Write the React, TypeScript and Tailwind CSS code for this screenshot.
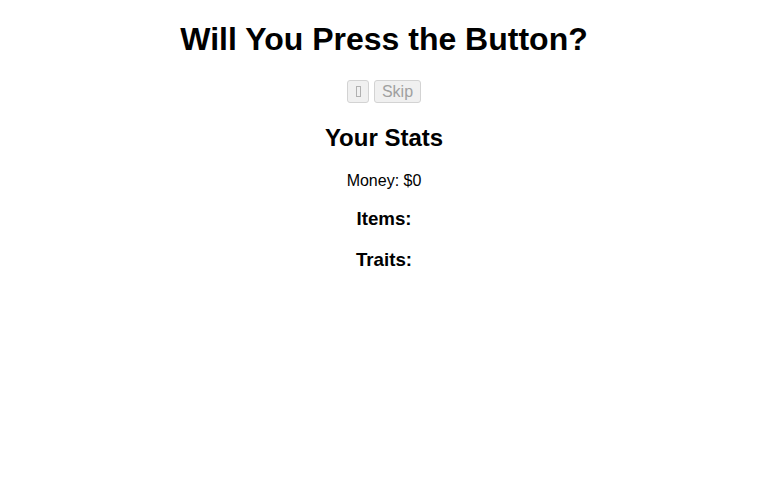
export default function App() {
  return (
    <div
      className="min-h-screen bg-white text-black text-center"
      style={{ fontFamily: '"Liberation Sans", Arial, sans-serif' }}
    >
      <div className="flex flex-col items-center pt-[21px]">
        <h1 className="text-[32px] leading-[37px] font-bold m-0">Will You Press the Button?</h1>

        <div className="mt-[22px] flex gap-[5px] items-center">
          <button
            disabled
            className="h-[23px] w-[22px] border border-[#d3d3d3] rounded-[3px] bg-[#f0f0f0] flex items-center justify-center"
          >
            <span className="block w-[5px] h-[11px] border border-[#b0b0b0]" />
          </button>
          <button
            disabled
            className="h-[23px] w-[47px] pt-[1px] border border-[#d3d3d3] rounded-[3px] bg-[#f0f0f0] text-[#a0a0a0] text-[16px] leading-[18px]"
          >
            Skip
          </button>
        </div>

        <h2 className="mt-[21px] text-[24px] leading-[28px] font-bold">Your Stats</h2>
        <p className="mt-[20px] text-[16px] leading-[18px]">Money: $0</p>
        <h3 className="mt-[18px] text-[18.72px] leading-[22px] font-bold">Items:</h3>
        <h3 className="mt-[19px] text-[18.72px] leading-[22px] font-bold">Traits:</h3>
      </div>
    </div>
  );
}
